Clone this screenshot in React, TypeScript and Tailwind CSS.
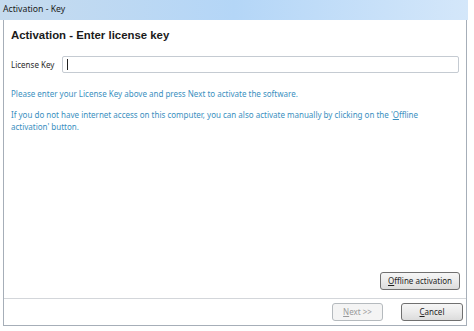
const font = { fontFamily: '"Noto Sans", "Open Sans", sans-serif' };

function Mnemonic({ children }: { children: string }) {
    return <span className="underline underline-offset-1">{children}</span>;
}

function WinButton({
    children,
    disabled,
    className,
}: {
    children: React.ReactNode;
    disabled?: boolean;
    className?: string;
}) {
    const look = disabled
        ? "border-[#b5babe] bg-[#f4f4f4] text-[#9a9a9a]"
        : "border-[#707070] bg-gradient-to-b from-[#f6f6f6] via-[#ebebeb] to-[#dcdcdc] text-[#1e1e1e]";
    return (
        <button
            className={`flex h-[18px] items-center justify-center rounded-[3px] border text-[8px] leading-none ${look} ${className ?? ""}`}
        >
            {children}
        </button>
    );
}

export default function App() {
    return (
        <div className="h-[331px] w-[474px] overflow-hidden bg-white" style={font}>
            {/* Title bar */}
            <div className="flex h-[20px] w-[468px] items-center bg-gradient-to-r from-[#c6dbee] via-[#b4d6f7] to-[#d4e7fa] pl-[3px] text-[8.7px] text-[#1b1b1b]">
                Activation - Key
            </div>

            {/* Window body */}
            <div className="ml-[3px] flex h-[306px] w-[464px] flex-col border border-t-0 border-[#a6aeb8]">
                <div className="flex flex-1 flex-col pl-[7px] pr-[6px] pb-[8px]">
                    <h1 className="mt-[7px] text-[11.4px] font-bold leading-[16px] text-[#1a1a1a]" style={{ fontFamily: '"Liberation Sans", Arial, sans-serif' }}>
                        Activation - Enter license key
                    </h1>

                    <div className="mt-[13px] flex items-center">
                        <span className="w-[51px] text-[8px] text-[#2b2b2b]">License Key</span>
                        <div className="flex h-[17px] w-[397px] items-center rounded-[2px] border border-[#c5cbd2] bg-white pl-[4px]">
                            <div className="h-[11px] w-px bg-[#222]" />
                        </div>
                    </div>

                    <p className="mt-[15px] text-[8px] leading-[12px] text-[#3a8fc0]">
                        Please enter your License Key above and press Next to activate the software.
                    </p>
                    <p className="mt-[9px] w-[420px] text-[8px] leading-[12px] text-[#3a8fc0]">
                        If you do not have internet access on this computer, you can also activate manually by clicking on the '<Mnemonic>O</Mnemonic>ffline
                        activation' button.
                    </p>

                    <div className="mt-auto flex justify-end">
                        <WinButton className="w-[80px]">
                            <Mnemonic>O</Mnemonic>ffline activation
                        </WinButton>
                    </div>
                </div>

                <div className="h-px bg-[#d3d6da]" />

                <div className="flex items-center justify-end gap-[18px] py-[4px] pr-[3px]">
                    <WinButton disabled className="w-[51px]">
                        <Mnemonic>N</Mnemonic>ext &gt;&gt;
                    </WinButton>
                    <WinButton className="w-[62px]">
                        <Mnemonic>C</Mnemonic>ancel
                    </WinButton>
                </div>
            </div>
        </div>
    );
}
